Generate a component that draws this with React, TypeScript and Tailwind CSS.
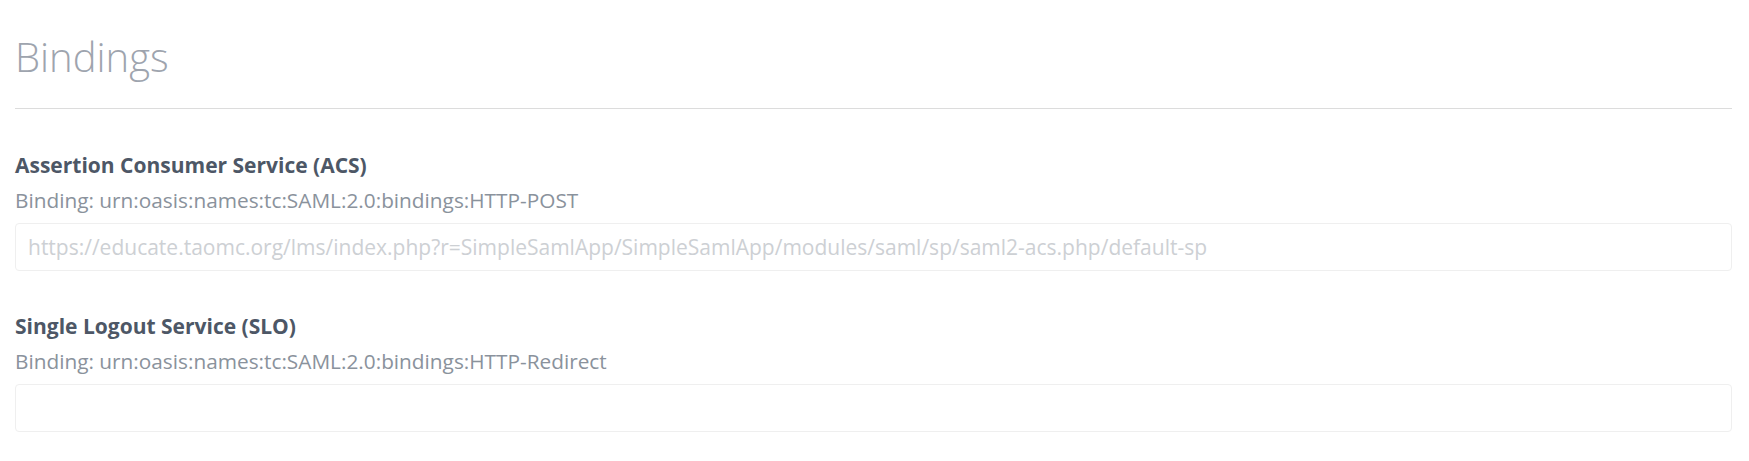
import React from 'react'

const FONT = "font-['Open_Sans',sans-serif]"

const bindings = [
  {
    title: 'Assertion Consumer Service (ACS)',
    binding: 'urn:oasis:names:tc:SAML:2.0:bindings:HTTP-POST',
    placeholder:
      'https://educate.taomc.org/lms/index.php?r=SimpleSamlApp/SimpleSamlApp/modules/saml/sp/saml2-acs.php/default-sp',
  },
  {
    title: 'Single Logout Service (SLO)',
    binding: 'urn:oasis:names:tc:SAML:2.0:bindings:HTTP-Redirect',
    placeholder: '',
  },
]

const BindingField = ({ title, binding, placeholder }: (typeof bindings)[number]) => (
  <div className="mb-[41px]">
    <h3 className="text-[21px] leading-[28px] font-bold text-[#4d5766] mb-[7px]">{title}</h3>
    <p className="text-[20.8px] leading-[28px] text-[#8a929c]">Binding: {binding}</p>
    <input
      type="text"
      readOnly
      placeholder={placeholder}
      className="mt-[9px] block w-full h-[48px] px-[12px] rounded-[4px] border border-[#efefef] bg-white text-[21px] text-[#4a5462] placeholder:text-[#cdd0d4] focus:outline-none"
    />
  </div>
)

export default function App() {
  return (
    <div className={`${FONT} bg-white min-h-screen pl-[15px] pr-[17px]`}>
      {/* Section header */}
      <h2 className="pt-[29px] text-[40px] leading-[56px] font-light text-[#9ea4ae]">Bindings</h2>
      <hr className="mt-[23px] border-t border-[#dcdcdc]" />

      {/* Binding list */}
      <div className="pt-[42px]">
        {bindings.map(b => (
          <BindingField key={b.title} {...b} />
        ))}
      </div>
    </div>
  )
}
